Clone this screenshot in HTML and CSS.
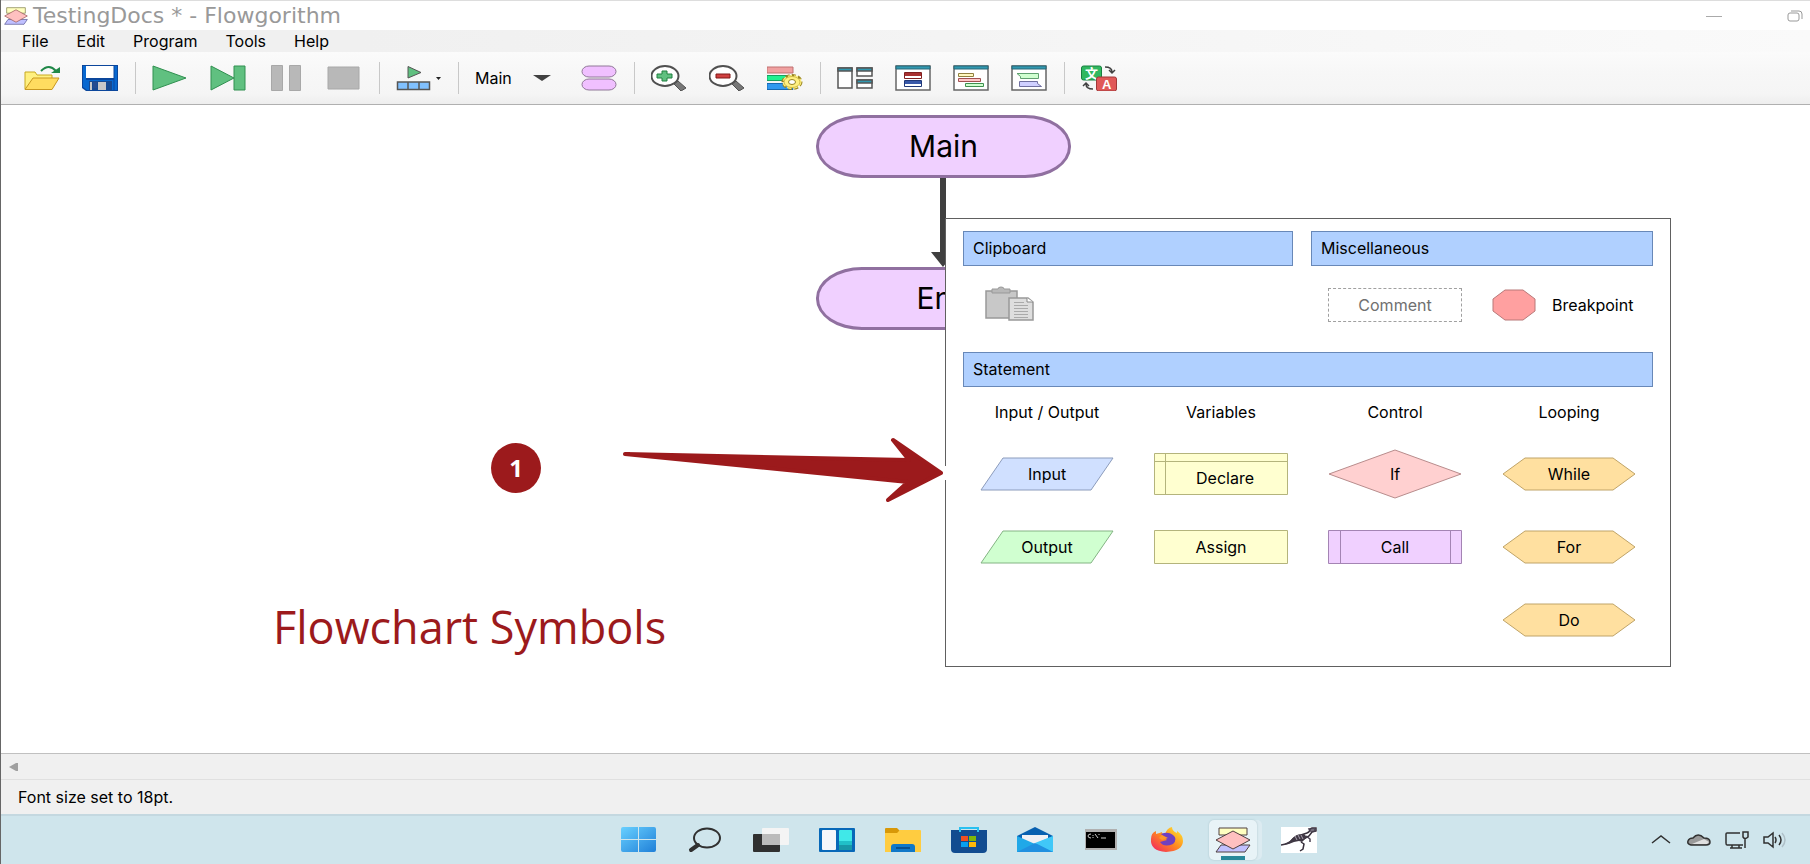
FILE: index.html
```html
<!DOCTYPE html>
<html lang="en">
<head>
    <meta charset="UTF-8">
    <meta name="viewport" content="width=device-width, initial-scale=1.0">
    <title>TestingDocs * - Flowgorithm</title>
    <link rel="stylesheet" href="styles.css">
</head>
<body>
    <header class="titlebar">
        <svg class="app-icon" width="24" height="18" viewBox="0 0 36 26" preserveAspectRatio="none">
            <path d="M4 1h28v8H4z" fill="#ffffc0" stroke="#777740"/>
            <path d="M6 18h29l-5 7H1z" fill="#c0c0ff" stroke="#505090"/>
            <path d="M18 4l17 9-17 9L1 13z" fill="#ffc0c0" stroke="#905050"/>
        </svg>
        <h1 class="title">TestingDocs * - Flowgorithm</h1>
        <button class="window-button" aria-label="Minimize">
            <svg width="16" height="14"><path d="M0 7.500h16" stroke="#aaa"/></svg>
        </button>
        <button class="window-button" aria-label="Restore">
            <svg width="16" height="14" fill="none" stroke="#999"><rect x="1" y="4" width="11" height="8" rx="2"/><path d="M4 2h8q3 0 3 3v5"/></svg>
        </button>
    </header>

    <nav class="menubar">
        <button>File</button>
        <button>Edit</button>
        <button>Program</button>
        <button>Tools</button>
        <button>Help</button>
    </nav>

    <div class="toolbar">
        <div class="group">
            <button aria-label="Open">
                <svg width="36" height="26">
                    <path d="M1 24V7h10l2 3h15v14z" fill="#fff080" stroke="#c8a820"/>
                    <path d="M1 24.500L9 13h26l-7 11.500z" fill="#ffdc60" stroke="#c89820"/>
                    <path d="M17 6q8-8 15 0" fill="none" stroke="#208848" stroke-width="2"/>
                    <path d="M36 2v6h-9z" fill="#208848"/>
                </svg>
            </button>
            <button aria-label="Save">
                <svg width="36" height="26">
                    <path d="M0 0h36v26H4l-4-3z" fill="#0c479c"/>
                    <path d="M1 1h3v14h28V1h3v24H5l-4-3z" fill="#0868d0"/>
                    <path d="M4 1h28v12H4z" fill="#fff"/>
                    <path d="M7 16h23v9H7z" fill="#174a92"/>
                    <path d="M8 17h2v8H8zM16 17h8v8h-8z" fill="#c8c8c8"/>
                    <path d="M11 17h4v6h-4z" fill="#254c90"/>
                    <path d="M32 1v24" stroke="#0c479c"/>
                </svg>
            </button>
        </div>
        <div class="group">
            <button aria-label="Run">
                <svg width="36" height="26"><path d="M1 1l33 12L1 25z" fill="#60c080" stroke="#309050"/></svg>
            </button>
            <button aria-label="Step">
                <svg width="36" height="26" fill="#60c080" stroke="#309050"><path d="M1 1l23 12L1 25z"/><path d="M24 1h11v24H24z"/></svg>
            </button>
            <button aria-label="Pause">
                <svg width="36" height="26" fill="#b8b8b8" stroke="#a8a8a8"><path d="M3.500.500h11v25h-11zM21.500.500h11v25h-11z"/></svg>
            </button>
            <button aria-label="Stop">
                <svg width="36" height="26"><path d="M2 2h31v22H2z" fill="#b8b8b8" stroke="#a8a8a8"/></svg>
            </button>
        </div>
        <div class="group">
            <button aria-label="Run speed">
                <svg width="36" height="26" stroke="#555"><path d="M12 1.500l13 6-13 5.500z" fill="#60c080"/><path d="M1.500 17h32v7.500h-32zM12 17v7.500M23 17v7.500" fill="#80c0ff" stroke-width="1.500"/></svg><svg width="9" height="26"><path d="M4 12h5l-2.500 3z" fill="#222"/></svg>
            </button>
        </div>
        <div class="group">
            <label class="function-picker">
                <select aria-label="Function"><option>Main</option></select>
                <svg width="18" height="8"><path d="M0 1h18L9 7z" fill="#404040"/></svg>
            </label>
            <button aria-label="Add function">
                <svg width="36" height="26" fill="#f0c0ff" stroke="#907898"><rect x="1" y="1" width="34" height="11" rx="7"/><rect x="1" y="14" width="34" height="11" rx="7"/></svg>
            </button>
        </div>
        <div class="group">
            <button aria-label="Zoom in">
                <svg width="36" height="26">
                    <path d="M23 19l4-3 8 7-5 3z" fill="#777" stroke="#505050"/>
                    <ellipse cx="14" cy="11" rx="13.500" ry="10" fill="#fff" stroke="#505050" stroke-width="2"/>
                    <path d="M11 6h5v3h5v4h-5v3h-5v-3H6V9h5z" fill="#60c080" stroke="#208040"/>
                </svg>
            </button>
            <button aria-label="Zoom out">
                <svg width="36" height="26">
                    <path d="M23 19l4-3 8 7-5 3z" fill="#777" stroke="#505050"/>
                    <ellipse cx="14" cy="11" rx="13.500" ry="10" fill="#fff" stroke="#505050" stroke-width="2"/>
                    <path d="M7 9h14v4H7z" fill="#d04040" stroke="#801818"/>
                </svg>
            </button>
            <button aria-label="Chart style">
                <svg width="36" height="26">
                    <path d="M0 2h26v6H0z" fill="#f0a0a0" stroke="#c07070"/>
                    <path d="M0 10.500h26v5H0z" fill="#20f090" stroke="#18a060"/>
                    <path d="M0 18.500h26v6H0z" fill="#3098f0" stroke="#1868b0"/>
                    <ellipse cx="25" cy="17" rx="9" ry="6.500" fill="none" stroke="#988420" stroke-width="3" stroke-dasharray="4 2"/>
                    <ellipse cx="25" cy="17" rx="8.500" ry="6" fill="none" stroke="#fff080" stroke-width="2" stroke-dasharray="4 2"/>
                    <ellipse cx="25" cy="17" rx="8" ry="5.500" fill="#fff080" stroke="#d0bc48"/>
                    <ellipse cx="25" cy="17" rx="3.500" ry="2.500" fill="#fff" stroke="#988420"/>
                </svg>
            </button>
        </div>
        <div class="group">
            <button aria-label="Layout windows">
                <svg width="36" height="26" stroke="#555" stroke-width="1.500" fill="#fff">
                    <path d="M1 3h14v20H1zM20 3h15v8H20zM20 15h15v8H20z"/>
                    <path d="M1 3h14v3H1zM20 3h15v3H20zM20 15h15v3H20z" fill="#3098b0"/>
                </svg>
            </button>
            <button aria-label="Variable watch">
                <svg width="36" height="26">
                    <path d="M1 1h34v24H1z" fill="#fff" stroke="#666" stroke-width="1.500"/><path d="M1 1h34v3H1z" fill="#3098b0" stroke="#286878"/>
                    <path d="M9.500 7.500h17v6h-17z" fill="#fff" stroke="#802020"/><path d="M10 8h16v3H10z" fill="#a83030"/>
                    <path d="M9.500 15.500h17v6h-17z" fill="#fff" stroke="#203878"/><path d="M10 16h16v3H10z" fill="#3858a8"/>
                </svg>
            </button>
            <button aria-label="Source code">
                <svg width="36" height="26">
                    <path d="M1 1h34v24H1z" fill="#fff" stroke="#666" stroke-width="1.500"/><path d="M1 1h34v3H1z" fill="#3098b0" stroke="#286878"/>
                    <path d="M5.500 8.500h15v3h-15z" fill="#fff8c0" stroke="#908040"/><path d="M5.500 13.500h22v3h-22z" fill="#ffc8c8" stroke="#a05050"/><path d="M12.500 18.500h18v3h-18z" fill="#d0ffd0" stroke="#409050"/>
                </svg>
            </button>
            <button aria-label="Console">
                <svg width="36" height="26">
                    <path d="M1 1h34v24H1z" fill="#fff" stroke="#666" stroke-width="1.500"/><path d="M1 1h34v3H1z" fill="#3098b0" stroke="#286878"/>
                    <path d="M6 8.500h21.500v5h-18v-2z" fill="#d0ffd0" stroke="#60a070"/><path d="M8.500 16.500h18v2l4 3h-22z" fill="#d0d0ff" stroke="#7070a0"/>
                </svg>
            </button>
        </div>
        <div class="group">
            <button aria-label="Language">
                <svg width="36" height="26">
                    <rect x=".5" y="1" width="20" height="14" rx="2" fill="#30b860" stroke="#188040"/>
                    <text class="glyph" x="4" y="13">文</text>
                    <rect x="15.500" y="12" width="20" height="14" rx="2" fill="#e05858" stroke="#a03838"/>
                    <text class="glyph" x="21" y="24">A</text>
                    <path d="M24 2q7 0 7 5M28 5l3 3 3-3M12 24q-7 0-7-5M2 21l3-3 3 3" fill="none" stroke="#404040" stroke-width="1.500"/>
                </svg>
            </button>
        </div>
    </div>

    <main class="canvas">
        <div class="node node-main">Main</div>
        <svg class="connector" width="24" height="90"><path d="M9 0h6v74h9L12 89 0 74h9z" fill="#404040"/></svg>
        <div class="node node-end">End</div>

        <section class="palette">
            <div class="palette-top">
                <div class="clipboard">
                    <h2 class="heading">Clipboard</h2>
                    <button class="paste" aria-label="Paste">
                        <svg width="50" height="36">
                            <path d="M1 5h31v27H1z" fill="#c8c8c8" stroke="#999" stroke-width="1.500"/>
                            <path d="M7 7V3h6q0-2 3-2t3 2h6v4z" fill="#b8b8b8" stroke="#999"/>
                            <path d="M24 12h19l5 4v18H24z" fill="#dedede" stroke="#999" stroke-width="1.500"/>
                            <path d="M42 12v4h6" fill="#fff" stroke="#888"/>
                            <path d="M29 16.500h10M29 19.500h14M29 22.500h14M29 25.500h14M29 28.500h14M29 31.500h14" stroke="#aaa"/>
                        </svg>
                    </button>
                </div>
                <div class="misc">
                    <h2 class="heading">Miscellaneous</h2>
                    <div class="misc-items">
                        <button class="comment">Comment</button>
                        <button class="breakpoint">
                            <svg width="44" height="32"><path d="M13 1h18l12 9v12l-12 9H13L1 22V10z" fill="#ffa0a0" stroke="#b87878"/></svg>
                            Breakpoint
                        </button>
                    </div>
                </div>
            </div>
            <h2 class="heading">Statement</h2>
            <div class="statements">
                <h3>Input / Output</h3>
                <h3>Variables</h3>
                <h3>Control</h3>
                <h3>Looping</h3>

                <button class="shape">
                    <svg width="134" height="34"><path d="M23 1h110l-22 32H1z" fill="#d0e0ff" stroke="#8c9cbc"/></svg>
                    <span>Input</span>
                </button>
                <button class="shape declare">
                    <svg width="134" height="42"><path d="M.500.500h133v41H.500zM.500 8.500h133M11.500.500v41" fill="#ffffd0" stroke="#b4b47c"/></svg>
                    <span>Declare</span>
                </button>
                <button class="shape">
                    <svg width="134" height="50"><path d="M67 1l66 24-66 24L1 25z" fill="#ffd0d0" stroke="#b88c8c"/></svg>
                    <span>If</span>
                </button>
                <button class="shape">
                    <svg width="134" height="34"><path d="M23 1h88l22 16-22 16H23L1 17z" fill="#ffe0a0" stroke="#c0a468"/></svg>
                    <span>While</span>
                </button>

                <button class="shape">
                    <svg width="134" height="34"><path d="M23 1h110l-22 32H1z" fill="#d0ffd0" stroke="#84b484"/></svg>
                    <span>Output</span>
                </button>
                <button class="shape">
                    <svg width="134" height="34"><path d="M.500.500h133v33H.500z" fill="#ffffd0" stroke="#b4b47c"/></svg>
                    <span>Assign</span>
                </button>
                <button class="shape">
                    <svg width="134" height="34"><path d="M.500.500h133v33H.500zM12.500.500v33M122.500.500v33" fill="#f0d0ff" stroke="#a484b4"/></svg>
                    <span>Call</span>
                </button>
                <button class="shape">
                    <svg width="134" height="34"><path d="M23 1h88l22 16-22 16H23L1 17z" fill="#ffe0a0" stroke="#c0a468"/></svg>
                    <span>For</span>
                </button>

                <button class="shape last">
                    <svg width="134" height="34"><path d="M23 1h88l22 16-22 16H23L1 17z" fill="#ffe0a0" stroke="#c0a468"/></svg>
                    <span>Do</span>
                </button>
            </div>
        </section>

        <!-- callout over the chart -->
        <div class="badge">1</div>
        <svg class="arrow" width="326" height="68">
            <path d="M324 30v14" stroke="#fff" stroke-width="4"/>
            <path d="M3 18l284 6-16-20 48 33-53 27 20-18z" fill="#9c1a1c" stroke="#9c1a1c" stroke-width="4" stroke-linejoin="round"/>
        </svg>
        <p class="caption">Flowchart Symbols</p>
    </main>

    <div class="scrollbar">
        <button aria-label="Scroll left"><svg width="9" height="10"><path d="M9 1v8H7L0 5l7-4z" fill="#a0a0a0"/></svg></button>
    </div>
    <div class="status">Font size set to 18pt.</div>

    <footer class="taskbar">
        <nav class="tasks">
            <button aria-label="Start">
                <svg width="36" height="26">
                    <defs><linearGradient id="win" x2="1" y2="1"><stop stop-color="#68d0ff"/><stop offset="1" stop-color="#2080d8"/></linearGradient></defs>
                    <path d="M2 0h15v12H0V2q0-2 2-2zM18 0h15q2 0 2 2v10H18zM0 13h17v12H2q-2 0-2-2zM18 13h17v10q0 2-2 2H18z" fill="url(#win)"/>
                </svg>
            </button>
            <button aria-label="Search">
                <svg width="36" height="26" fill="none" stroke="#303030"><ellipse cx="20" cy="11" rx="13" ry="9.500" stroke-width="2"/><path d="M11 18l-7 5" stroke-width="4" stroke-linecap="round"/></svg>
            </button>
            <button aria-label="Task view">
                <svg width="36" height="26"><rect y="7" width="27" height="18" rx="1" fill="#303030"/><rect x="9" y="1" width="27" height="17" rx="1" fill="#f4f4f4"/><path d="M9 7h18v11H9z" fill="#bbb"/></svg>
            </button>
            <button aria-label="Widgets">
                <svg width="36" height="26"><rect y="1" width="36" height="24" rx="1" fill="#0868b8"/><rect x="3" y="3" width="14" height="20" rx="1" fill="#f4f6fa"/><rect x="20" y="3" width="13" height="20" rx="1" fill="#40e8e8"/><path d="M20 14h13v4H20z" fill="#20c0c8"/><path d="M20 18h13v5H20z" fill="#1898a8"/></svg>
            </button>
            <button aria-label="File Explorer">
                <svg width="36" height="26"><path d="M0 2q0-1 1-1h11l3 3v3H0z" fill="#d89808"/><path d="M0 6h12l3-3h20q1 0 1 1v21H0z" fill="#ffcc40"/><path d="M6 25v-5q0-3 3-3h18q3 0 3 3v5z" fill="#1078c8"/><path d="M11 21h14" stroke="#085090" stroke-width="2"/></svg>
            </button>
            <button aria-label="Store">
                <svg width="36" height="26"><path d="M0 3h36v19q0 4-4 4H4q-4 0-4-4z" fill="#124c90"/><path d="M9 5V1h18v4" fill="none" stroke="#28c0f0" stroke-width="2"/><path d="M10 9h7v5h-7z" fill="#f05020"/><path d="M18 9h7v5h-7z" fill="#80b808"/><path d="M10 15h7v5h-7z" fill="#08a0f0"/><path d="M18 15h7v5h-7z" fill="#ffb808"/></svg>
            </button>
            <button aria-label="Mail">
                <svg width="36" height="26"><path d="M0 9L18 0l18 9v9H0z" fill="#0860b0"/><path d="M5 8h26v7l-13 5L5 14z" fill="#f0f0f4"/><path d="M0 9l18 8 18-8v16H0z" fill="#20a8e8"/><path d="M18 16L36 9v16z" fill="#40c8f8"/><path d="M0 25l18-9 18 9z" fill="#2090e0"/></svg>
            </button>
            <button aria-label="Command Prompt">
                <svg width="36" height="26"><path d="M2 2h32v21H2z" fill="#b0b0b0"/><path d="M3 5h29v16H3z" fill="#000"/><path d="M8 7q-3 0-3 2t3 2M10 8v1M10 10v1M12 7l3 4M16 7v1M18 11h5" fill="none" stroke="#ccc"/></svg>
            </button>
            <button aria-label="Firefox">
                <svg width="36" height="26">
                    <defs><linearGradient id="fox" x1="1" x2="0" y2="1"><stop stop-color="#fff030"/><stop offset=".5" stop-color="#ff8820"/><stop offset="1" stop-color="#f01868"/></linearGradient></defs>
                    <path d="M2 12q0-6 5-8v3q4-1 6-2 0 2 3 2 2-6 7-7 0 4 5 6V4q6 4 6 10 0 10-17 11Q1 24 2 12z" fill="url(#fox)"/>
                    <path d="M12 7q7-3 12 1t0 9q-9 4-13-2l7-2z" fill="#7040c0"/><path d="M13 8l6 3-6 2-3-2z" fill="#ff9828"/>
                </svg>
            </button>
            <button class="active" aria-label="Flowgorithm">
                <svg width="36" height="26" stroke="#504040"><path d="M4 1h28v7H4z" fill="#ffffc0"/><path d="M6 18h29l-5 7H1z" fill="#c0c0ff"/><path d="M18 4l17 9-17 9L1 13z" fill="#ffc0c0"/></svg>
            </button>
            <button aria-label="Dinosaur">
                <svg width="36" height="26"><path d="M0 0h36v26H0z" fill="#fff"/><path d="M0 18q8-1 11-5 4-5 9-5l6-2q3-1 3-4l2-1h4v3l-4 1-3 4-7 4M20 15l3 2-1 5-3 2" fill="none" stroke="#38303c" stroke-width="1.500"/><path d="M9 14q5-7 14-7l3 3-5 5-3-1-5 1q-6 3-11 3z" fill="#403844"/><path d="M25 9l4 3v3M28 2h6v2h-5z" fill="none" stroke="#484050" stroke-width="1.500"/><path d="M14 9l2 4M17 8l2 4M20 8l2 4" stroke="#a8a0b0"/></svg>
            </button>
        </nav>
        <div class="tray">
            <svg width="24" height="20"><path d="M3 13l9-7 9 7" fill="none" stroke="#303030" stroke-width="1.500"/></svg>
            <svg width="24" height="20"><path d="M4 15q-4-1-3-4 1-3 5-3 5-6 11 0 6 0 6 4 0 3-4 3z" fill="#999" stroke="#303030" stroke-width="1.500"/><path d="M5 14l12-5 5 3-2 2z" fill="#e0e0e0"/></svg>
            <svg width="24" height="20" fill="none" stroke="#303030" stroke-width="1.500"><path d="M15 3H2q-1 0-1 1v9q0 2 1 2h16M7 15v3M14 15v3M5 18h12M18 2h5v5q-3 3-5 0zM20 8v10"/></svg>
            <svg width="24" height="20" fill="none" stroke="#303030" stroke-width="1.500"><path d="M1 7h4l5-4v14l-5-4H1zM12 7q2 3 0 6M16 5q4 5 0 10"/><path d="M19 3q6 7 0 14" stroke="#b0c0c8"/></svg>
        </div>
    </footer>
</body>
</html>
```
FILE: styles.css
```css
* {
    box-sizing: border-box;
}

body {
    margin: 0;
    min-height: 100vh;
    display: flex;
    flex-direction: column;
    border-left: 1px solid #666;
    background-color: #fff;
    color: #000;
    font-family: Inter, "Liberation Sans", Arial, sans-serif;
    font-size: 16px;
}

button {
    display: flex;
    align-items: center;
    justify-content: center;
    border: none;
    padding: 0;
    background: none;
    color: inherit;
    font: inherit;
    cursor: pointer;
}

svg {
    display: block;
}

h1,
h2,
h3,
p {
    margin: 0;
    font-weight: normal;
}

.titlebar {
    height: 30px;
    display: flex;
    align-items: center;
    gap: 65px;
    padding: 0 7px 0 3px;
    border-top: 1px solid #ddd;
}

.title {
    flex: 1;
    margin-left: -60px;
    color: #999;
    font-family: "DejaVu Sans", sans-serif;
    font-size: 22px;
    line-height: 28px;
}

.menubar {
    height: 22px;
    display: flex;
    align-items: center;
    gap: 28px;
    padding-left: 21px;
    background: linear-gradient(to right, #f0f0f0 20%, #fafafa);
}

.toolbar {
    height: 53px;
    display: flex;
    align-items: center;
    padding-left: 7px;
    border-bottom: 1px solid #b0b0b0;
    background: linear-gradient(#fbfbfb, #f7f7f7 40%, #f5f5f5 80%, #eee);
}

.group {
    height: 32px;
    display: flex;
    align-items: center;
    gap: 22px;
    padding: 0 17px 0 16px;
    border-right: 1px solid #c8c8c8;
}

.group:last-child {
    border-right: none;
}

.function-picker {
    width: 84px;
    display: flex;
    align-items: center;
    gap: 12px;
}

.function-picker select {
    width: 46px;
    appearance: none;
    border: none;
    padding: 0;
    background: none;
    color: #000;
    font: inherit;
}

.glyph {
    fill: #fff;
    font-family: "Liberation Sans", "Noto Sans CJK SC", sans-serif;
    font-size: 13px;
    font-weight: bold;
}

/* drawing area */
.canvas {
    flex: 1;
    min-height: 600px;
    position: relative;
    overflow: hidden;
}

.node {
    position: absolute;
    left: 815px;
    width: 255px;
    height: 63px;
    border: 3px solid #9070a0;
    border-radius: 46px / 31px;
    background-color: #f0d0ff;
    font-size: 30px;
    line-height: 57px;
    text-align: center;
}

.node-main {
    top: 10px;
}

.node-end {
    top: 162px;
}

.connector {
    position: absolute;
    left: 930px;
    top: 73px;
}

.palette {
    position: absolute;
    left: 944px;
    top: 113px;
    width: 726px;
    padding: 12px 17px 10px;
    border: 1px solid #606060;
    background-color: #fff;
}

.palette-top {
    display: grid;
    grid-template-columns: 330px 1fr;
    gap: 18px;
    margin-bottom: 30px;
}

.heading {
    height: 35px;
    padding-left: 9px;
    border: 1px solid #6888b8;
    background-color: #b0d0ff;
    font-size: 16px;
    line-height: 33px;
}

.paste {
    margin: 20px 0 0 22px;
}

.misc-items {
    display: flex;
    align-items: center;
    gap: 30px;
    padding: 22px 0 0 17px;
}

.comment {
    width: 134px;
    height: 34px;
    border: 1px dashed #a0a0a0;
    color: #707070;
}

.breakpoint {
    gap: 16px;
}

.statements {
    display: grid;
    grid-template-columns: repeat(4, 134px);
    grid-template-rows: 50px 73px 73px 73px;
    justify-content: space-between;
    align-items: center;
    padding: 0 17px;
}

.statements h3 {
    font-size: 16px;
    line-height: 20px;
    text-align: center;
}

.shape {
    display: grid;
    place-items: center;
}

.shape svg,
.shape span {
    grid-area: 1 / 1;
}

.declare span {
    padding: 8px 0 0 8px;
}

.last {
    grid-column: 4;
}

.badge {
    position: absolute;
    left: 490px;
    top: 338px;
    width: 50px;
    height: 50px;
    border-radius: 50%;
    background-color: #9c1a1c;
    color: #fff;
    font-family: "Open Sans", sans-serif;
    font-size: 24px;
    font-weight: bold;
    line-height: 50px;
    text-align: center;
}

.arrow {
    position: absolute;
    left: 621px;
    top: 331px;
}

.caption {
    position: absolute;
    left: 272px;
    top: 492px;
    color: #9c1a1c;
    font-family: "Open Sans", sans-serif;
    font-size: 45px;
    line-height: 60px;
}

.scrollbar {
    height: 26px;
    display: flex;
    align-items: center;
    padding-left: 8px;
    border-top: 1px solid #c0c0c0;
    background-color: #f0f0f0;
}

.status {
    height: 35px;
    padding-left: 17px;
    border-top: 1px solid #e0e0e0;
    background-color: #f0f0f0;
    line-height: 34px;
}

.taskbar {
    height: 50px;
    display: flex;
    justify-content: space-between;
    padding-right: 23px;
    border-top: 2px solid #c4d8e0;
    background-color: #cfe5ec;
}

.tasks {
    display: flex;
    gap: 18px;
    margin: 4px 0 0 34.4%;
}

.tasks button {
    width: 48px;
    height: 40px;
}

.tasks .active {
    border-radius: 5px;
    background: linear-gradient(#28889a, #28889a) center bottom / 24px 4px no-repeat #e8f3f7;
    box-shadow: 0 0 2px #a8c0c8, 5px 0 0 #dcebf1;
}

.tray {
    display: flex;
    align-items: center;
    gap: 14px;
}
```
